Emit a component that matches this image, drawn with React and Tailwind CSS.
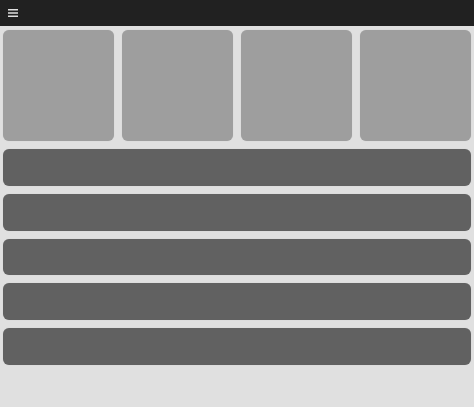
import React from "react";

const App = () => {
  const cards = [1, 2, 3, 4];
  const rows = [1, 2, 3, 4, 5];

  return (
    <div className="min-h-[407px] bg-[#e0e0e0] font-['Roboto',sans-serif]">
      {/* Top bar */}
      <header className="h-[26px] bg-[#212121] flex items-center px-[8px]">
        <svg width="10" height="8" viewBox="0 0 10 8" className="block">
          <rect x="0" y="0" width="10" height="1.5" fill="#e0e0e0" />
          <rect x="0" y="3.25" width="10" height="1.5" fill="#e0e0e0" />
          <rect x="0" y="6.5" width="10" height="1.5" fill="#e0e0e0" />
        </svg>
      </header>

      <main className="px-[3px] pt-[4px] flex flex-col gap-[8px]">
        <div className="grid grid-cols-4 gap-[8px]">
          {cards.map((c) => (
            <div
              key={c}
              className="aspect-square bg-[#9e9e9e] rounded-[6px] shadow-[0_0_1px_rgba(0,0,0,0.15)]"
            />
          ))}
        </div>

        {rows.map((r) => (
          <div
            key={r}
            className="h-[36.75px] bg-[#616161] rounded-[6px] shadow-[0_0_1px_rgba(0,0,0,0.15)]"
          />
        ))}
      </main>
    </div>
  );
};

export default App;
